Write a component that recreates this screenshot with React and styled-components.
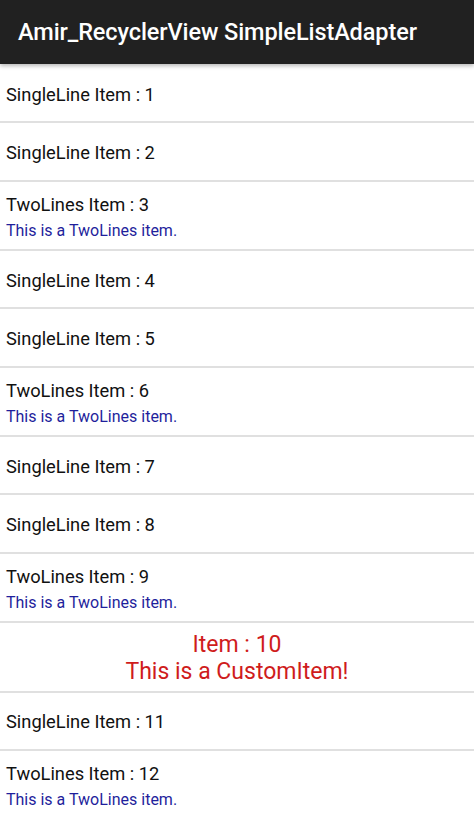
import React from "react";
import styled, { createGlobalStyle } from "styled-components";

const Global = createGlobalStyle`
  html, body { margin: 0; padding: 0; background: #fff; }
  body { font-family: Roboto, "Noto Sans", sans-serif; overflow: hidden; }
  * { box-sizing: border-box; }
`;

const Screen = styled.div`
  width: 474px;
  height: 815px;
  overflow: hidden;
  display: flex;
  flex-direction: column;
  background: #fff;
`;

const Toolbar = styled.header`
  height: 64px;
  flex: none;
  background: #212121;
  display: flex;
  align-items: center;
  padding-left: 18px;
  box-shadow: 0 2px 4px rgba(0, 0, 0, 0.28);
  position: relative;
  z-index: 1;
`;

const Title = styled.h1`
  margin: 0;
  color: #fff;
  font-size: 23.5px;
  font-weight: 500;
  letter-spacing: -0.1px;
`;

const List = styled.div`
  display: flex;
  flex-direction: column;
  margin-top: 1px;
`;

const Row = styled.div`
  height: ${(p) => (p.$tall ? 69.5 : 58.3)}px;
  flex: none;
  border-bottom: 2px solid #e0e0e0;
  display: flex;
  flex-direction: column;
  justify-content: center;
  align-items: ${(p) => (p.$center ? "center" : "flex-start")};
  padding: 3px 0 0 ${(p) => (p.$center ? 0 : 6)}px;
  gap: ${(p) => (p.$center ? 1 : 5)}px;
`;

const Primary = styled.div`
  font-size: 18.3px;
  color: #111;
  line-height: 22px;
`;

const Secondary = styled.div`
  font-size: 16px;
  color: #1f1f9c;
  line-height: 19px;
`;

const Custom = styled.div`
  font-size: ${(p) => p.$size}px;
  color: #cf1c1c;
  line-height: 26px;
`;

const items = [
  { t: "s", n: 1 },
  { t: "s", n: 2 },
  { t: "d", n: 3 },
  { t: "s", n: 4 },
  { t: "s", n: 5 },
  { t: "d", n: 6 },
  { t: "s", n: 7 },
  { t: "s", n: 8 },
  { t: "d", n: 9 },
  { t: "c", n: 10 },
  { t: "s", n: 11 },
  { t: "d", n: 12 },
];

export default function App() {
  return (
    <>
      <Global />
      <Screen>
        <Toolbar>
          <Title>Amir_RecyclerView SimpleListAdapter</Title>
        </Toolbar>
        <List>
          {items.map((it) => {
            if (it.t === "s")
              return (
                <Row key={it.n}>
                  <Primary>SingleLine Item : {it.n}</Primary>
                </Row>
              );
            if (it.t === "d")
              return (
                <Row key={it.n} $tall>
                  <Primary>TwoLines Item : {it.n}</Primary>
                  <Secondary>This is a TwoLines item.</Secondary>
                </Row>
              );
            return (
              <Row key={it.n} $tall $center>
                <Custom $size={23}>Item : {it.n}</Custom>
                <Custom $size={23}>This is a CustomItem!</Custom>
              </Row>
            );
          })}
        </List>
      </Screen>
    </>
  );
}
